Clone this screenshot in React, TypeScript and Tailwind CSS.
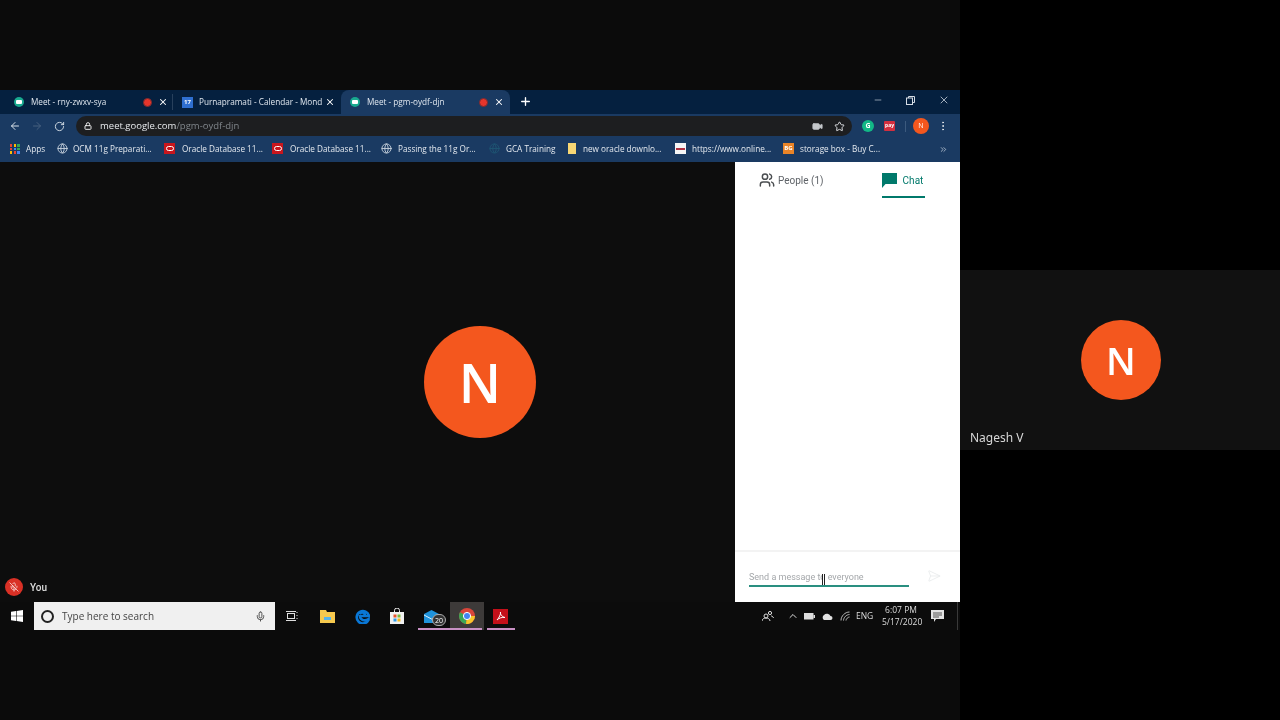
import React from 'react';
import { ArrowLeft, ArrowRight, RotateCw, Lock, Star, Video, Plus, X, Minus, ChevronUp, Mic, MicOff, EllipsisVertical, ChevronsRight, Globe, Users, SendHorizontal } from 'lucide-react';

const MeetIcon = () => (
    <svg width="10" height="10" viewBox="0 0 10 10" className="shrink-0">
        <circle cx="5" cy="5" r="5" fill="#19a98f" />
        <rect x="2" y="3" width="6" height="4" rx="1" fill="#ffffff" />
    </svg>
);

const RecDot = () => (
    <div className="w-[9px] h-[9px] rounded-full bg-[#e5352b] border border-[#7d2a2e] shrink-0" />
);

const Tab: React.FC<{ title: string; icon: React.ReactNode; rec?: boolean; className: string; textClass: string }> = ({ title, icon, rec, className, textClass }) => (
    <div className={`flex items-center h-full ${className}`}>
        {icon}
        <span className={`text-[8.2px] text-[#dfe6ee] whitespace-nowrap ${textClass}`}>{title}</span>
        {rec && <RecDot />}
        <X size={10} strokeWidth={2.5} className="text-white ml-[6px] shrink-0" />
    </div>
);

const OracleIcon = () => (
    <div className="w-[11px] h-[11px] bg-[#c8161d] flex items-center justify-center shrink-0">
        <div className="w-[8px] h-[5px] rounded-full border border-white" />
    </div>
);

const Bookmark: React.FC<{ label: string; icon: React.ReactNode; className: string }> = ({ label, icon, className }) => (
    <div className={`flex items-center ${className}`}>
        {icon}
        <span className="text-[8.2px] text-[#e4e9ef] whitespace-nowrap">{label}</span>
    </div>
);

const BrowserChrome = () => (
    <div className="font-['Open_Sans',sans-serif]">
        {/* tab strip */}
        <div className="h-[24px] bg-[#05203f] flex items-stretch relative">
            <Tab title="Meet - rny-zwxv-sya" icon={<MeetIcon />} rec className="w-[173px] pl-[14px] border-r border-[#28405c] my-[4px] !h-auto" textClass="ml-[7px] w-[112px]" />
            <Tab title="Purnapramati - Calendar - Mond" icon={
                <div className="w-[11px] h-[11px] bg-[#2f6fd0] text-white text-[6px] font-bold flex items-center justify-center shrink-0 ml-[9px]">17</div>
            } className="w-[168px]" textClass="ml-[6px] w-[120px]" />
            <Tab title="Meet - pgm-oydf-djn" icon={<MeetIcon />} rec className="w-[169px] pl-[9px] bg-[#1a3a62] rounded-t-lg" textClass="ml-[7px] w-[112px]" />
            <Plus size={13} strokeWidth={2.5} className="text-white self-center ml-[9px] mb-[2px]" />
            <div className="ml-auto flex items-center pr-[10px] gap-[23px] text-[#d5dce5] pb-[4px]">
                <Minus size={10} strokeWidth={1.5} />
                <svg width="9" height="9" viewBox="0 0 9 9" fill="none" stroke="currentColor"><rect x="0.5" y="2" width="6" height="6.5" /><path d="M2.5 2V0.5h6V6.5H7" /></svg>
                <X size={12} strokeWidth={1.5} />
            </div>
        </div>
        {/* toolbar */}
        <div className="h-[24px] bg-[#1a3a62] flex items-center">
            <ArrowLeft size={12} className="text-[#d8e0e8] ml-[9px]" />
            <ArrowRight size={12} className="text-[#47607f] ml-[10px]" />
            <RotateCw size={11} className="text-[#d8e0e8] ml-[11px]" />
            <div className="ml-[11px] w-[776px] h-[20px] rounded-full bg-[#1d1e20] flex items-center">
                <Lock size={8} strokeWidth={3} className="text-[#e8e8e8] ml-[8px]" />
                <span className="text-[9.5px] ml-[8px] text-[#e8eaed]">meet.google.com<span className="text-[#80868b]">/pgm-oydf-djn</span></span>
                <Video size={11} fill="#c4c7ca" className="text-[#c4c7ca] ml-auto" />
                <Star size={11} className="text-[#e8eaed] ml-[11px] mr-[7px]" />
            </div>
            <div className="w-[12px] h-[12px] rounded-full bg-[#12b886] ml-[10px] text-white text-[7px] font-bold flex items-center justify-center">G</div>
            <div className="w-[11px] h-[10px] rounded-[1px] bg-[#d32f3f] ml-[10px] text-white text-[5px] font-bold flex items-center justify-center">pay</div>
            <div className="w-px h-[11px] bg-[#3c5a7e] ml-[10px]" />
            <div className="w-[16px] h-[16px] rounded-full bg-[#f4571e] ml-[7px] text-white text-[7px] flex items-center justify-center">N</div>
            <EllipsisVertical size={12} className="text-[#e0e5ea] ml-[8px]" />
        </div>
        {/* bookmarks */}
        <div className="h-[24px] pb-[2px] bg-[#1a3a62] flex items-center relative">
            <Bookmark label="Apps" className="ml-[10px] w-[47px] gap-[6px]" icon={
                <div className="grid grid-cols-3 gap-px w-[10px] shrink-0">
                    {['#ea4335','#fbbc04','#34a853','#ea4335','#4285f4','#34a853','#fbbc04','#ea4335','#4285f4'].map((c, i) => (
                        <div key={i} className="w-[2.4px] h-[2.4px]" style={{ backgroundColor: c }} />
                    ))}
                </div>
            } />
            <Bookmark label="OCM 11g Preparati..." className="w-[107px] gap-[5px]" icon={<Globe size={11} className="text-[#c5d0dc] shrink-0" />} />
            <Bookmark label="Oracle Database 11..." className="w-[108px] gap-[7px]" icon={<OracleIcon />} />
            <Bookmark label="Oracle Database 11..." className="w-[109px] gap-[7px]" icon={<OracleIcon />} />
            <Bookmark label="Passing the 11g Or..." className="w-[108px] gap-[6px]" icon={<Globe size={11} className="text-[#c5d0dc] shrink-0" />} />
            <Bookmark label="GCA Training" className="w-[79px] gap-[6px]" icon={<Globe size={11} className="text-[#1f5573] shrink-0" />} />
            <Bookmark label="new oracle downlo..." className="w-[107px] gap-[7px]" icon={<div className="w-[8px] h-[11px] bg-[#f7d774] shrink-0" />} />
            <Bookmark label="https://www.online..." className="w-[108px] gap-[6px]" icon={
                <div className="w-[11px] h-[11px] bg-[#f5f5f5] flex items-center justify-center shrink-0"><div className="w-[9px] h-[2px] bg-[#b03040]" /></div>
            } />
            <Bookmark label="storage box - Buy C..." className="gap-[6px]" icon={
                <div className="w-[11px] h-[11px] bg-[#e98427] text-white text-[6px] font-bold flex items-center justify-center shrink-0">BG</div>
            } />
            <ChevronsRight size={9} className="absolute right-[12px] text-[#c9d3df]" />
        </div>
    </div>
);

const ChatPanel = () => (
    <div className="w-[225px] bg-white flex flex-col font-['Roboto',sans-serif] relative">
        <div className="h-[36px] flex text-[10px]">
            <div className="flex items-center ml-[24px] gap-[3px] text-[#5f6368]">
                <Users size={16} strokeWidth={2.2} className="text-[#4a4d50]" />
                <span>People (1)</span>
            </div>
            <div className="ml-[58px] w-[43px] h-full border-b-2 border-[#00796b] flex items-center gap-[6px] text-[#00796b] pt-[2px]">
                <svg width="15" height="15" viewBox="0 0 15 15"><path d="M0 0h15v11H3.5L0 15z" fill="#00796b" /></svg>
                <span>Chat</span>
            </div>
        </div>
        <div className="flex-1" />
        <div className="h-[52px] border-t-2 border-[#f3f3f3] flex items-start pl-[14px]">
            <div className="w-[160px] h-[23px] mt-[12px] border-b-2 border-[#2a8f80] flex items-center text-[9px] text-[#a4a7aa] pt-[6px]">
                Send a message to everyone
            </div>
            <SendHorizontal size={14} strokeWidth={1.2} className="text-[#e4e6e8] ml-[18px] mt-[17px]" />
        </div>
        {/* mouse cursor */}
        <div className="absolute left-[87px] bottom-[17px] w-[3px] h-[11px] border-x border-[#222] bg-white" />
    </div>
);

const Taskbar = () => (
    <div className="h-[28px] bg-[#0c0c0c] flex items-center font-['Open_Sans',sans-serif] relative">
        <svg width="12" height="12" viewBox="0 0 12 12" fill="#fff" className="ml-[11px]"><path d="M0 1.7 5 1v4.7H0zM5.6.9 12 0v5.7H5.6zM0 6.3h5V11l-5-.7zM5.6 6.3H12V12l-6.4-.9z" /></svg>
        <div className="ml-[11px] w-[241px] h-full bg-[#f0f0f0] flex items-center">
            <div className="ml-[7px] w-[13px] h-[13px] rounded-full border-2 border-[#222]" />
            <span className="ml-[8px] text-[10px] text-[#444]">Type here to search</span>
            <Mic size={11} className="ml-auto mr-[9px] text-[#444]" />
        </div>
        <svg width="12" height="10" viewBox="0 0 12 10" fill="none" stroke="#ddd" className="ml-[11px]"><rect x="1.5" y="2.5" width="7" height="5" /><path d="M0 .5h10M0 9.5h10M11 1v1M11 4v1M11 7v1" /></svg>
        {/* explorer */}
        <div className="ml-[21px] w-[16px] flex justify-center">
            <svg width="15" height="13" viewBox="0 0 15 13"><path d="M0 0h6l1 2h8v11H0z" fill="#f6c94e" /><rect x="4" y="7" width="7" height="3" fill="#58b4e8" /></svg>
        </div>
        {/* edge */}
        <div className="ml-[19px] w-[16px] flex justify-center">
            <svg width="15" height="15" viewBox="0 0 15 15" fill="none"><path d="M13.5 11a6.2 6.2 0 1 1 .5-4H5c0 4 4.5 5.5 8.5 3z M4.5 5c1-2 5-2.5 5.5 1" stroke="#0a78d7" strokeWidth="2.6" /></svg>
        </div>
        {/* store */}
        <div className="ml-[19px] w-[16px] flex justify-center">
            <svg width="14" height="16" viewBox="0 0 14 16">
                <path d="M4.5 4V2.5a2.5 2.5 0 0 1 5 0V4" fill="none" stroke="#f1f1f1" />
                <rect y="4" width="14" height="12" fill="#f1f1f1" />
                <rect x="3.5" y="6.5" width="3" height="3" fill="#e8532c" />
                <rect x="7.5" y="6.5" width="3" height="3" fill="#7db93a" />
                <rect x="3.5" y="10.5" width="3" height="3" fill="#2f9be8" />
                <rect x="7.5" y="10.5" width="3" height="3" fill="#f5b91e" />
            </svg>
        </div>
        {/* mail */}
        <div className="ml-[19px] w-[20px] h-full relative flex items-center">
            <svg width="15" height="13" viewBox="0 0 15 13"><path d="M0 4l7.5-4L15 4v9H0z" fill="#1f93dc" /><path d="M0 5l7.5 4L15 5" stroke="#e3f2fb" fill="none" /></svg>
            <div className="absolute left-[8px] top-[12px] w-[14px] h-[12px] rounded-full bg-[#333] border border-[#aaa] text-white text-[7px] leading-none flex items-center justify-center">20</div>
            <div className="absolute left-[-6px] right-[-6px] bottom-0 h-[2px] bg-[#c890c4]" />
        </div>
        {/* chrome */}
        <div className="ml-[6px] w-[34px] h-full bg-[#3d3a39] relative flex items-center justify-center">
            <svg width="16" height="16" viewBox="0 0 16 16"><circle cx="8" cy="8" r="8" fill="#d9453a" /><path d="M8 8 1 4.2A8 8 0 0 0 7 16z" fill="#3aa757" /><path d="M8 8h8a8 8 0 0 1-9 8z" fill="#f7c52b" /><circle cx="8" cy="8" r="3.6" fill="#4285f4" stroke="#fff" /></svg>
            <div className="absolute left-0 right-[2px] bottom-0 h-[2px] bg-[#c890c4]" />
        </div>
        {/* acrobat */}
        <div className="ml-[3px] w-[28px] h-full relative flex items-center justify-center pr-[1px]">
            <div className="w-[15px] h-[15px] bg-[#c3101a] flex items-center justify-center">
                <svg width="10" height="10" viewBox="0 0 10 10" fill="none" stroke="#fff"><path d="M1 9C3 7 5 3 4.5 1 4 3 6 6 9 6.5 6 6 3 7 1 9z" /></svg>
            </div>
            <div className="absolute left-0 right-0 bottom-0 h-[2px] bg-[#c890c4]" />
        </div>
        {/* tray */}
        <div className="ml-auto flex items-center h-full text-[#dcdcdc]">
            <svg width="12" height="12" viewBox="0 0 12 12" fill="none" stroke="#ddd"><circle cx="4" cy="6" r="2" /><path d="M0 11c0-2 2-3 4-3s4 1 4 3" /><circle cx="8" cy="3" r="1.6" /><path d="M9 6c1 0 2 .5 2.5 2" /></svg>
            <ChevronUp size={12} className="ml-[13px]" />
            <svg width="11" height="8" viewBox="0 0 11 8" fill="#ddd" className="ml-[5px]"><rect x="0" y="1" width="9.5" height="6.5" /><rect x="9.5" y="3" width="1.5" height="3" /></svg>
            <svg width="12" height="7" viewBox="0 0 12 7" fill="#e2e2e2" className="ml-[6px]"><path d="M3 7a3 3 0 0 1 0-5 4 4 0 0 1 6.5 1A2 2 0 0 1 9.5 7z" /></svg>
            <svg width="10" height="10" viewBox="0 0 10 10" fill="none" stroke="#bbb" className="ml-[7px]"><path d="M1 9.5C1 5 5 1 9.5 1M3.5 9.5C3.5 6.5 6.5 3.5 9.5 3.5M6 9.5C6 8 8 6 9.5 6" /></svg>
            <span className="ml-[6px] w-[24px] text-[8.5px]">ENG</span>
            <div className="ml-[2px] w-[38px] text-[8.5px] leading-[12px] text-center">
                <div>6:07 PM</div>
                <div>5/17/2020</div>
            </div>
            <svg width="13" height="12" viewBox="0 0 13 12" className="ml-[11px]"><path d="M0 0h13v9H5l-2 3V9H0z" fill="#e4e4e4" /><path d="M2 3h9M2 5h9M2 7h6" stroke="#555" /></svg>
            <div className="w-px h-full bg-[#3a3a3a] ml-[13px] mr-[2px]" />
        </div>
    </div>
);

export default function App() {
    return (
        <div className="w-[1280px] h-[720px] bg-black flex overflow-hidden blur-[0.35px]">
            <div className="w-[960px] flex flex-col">
                <div className="h-[90px] bg-[#0b0b0b]" />
                <BrowserChrome />
                <div className="h-[440px] flex bg-[#0d0d0d]">
                    <div className="w-[735px] flex flex-col justify-between">
                        <div className="ml-[424px] mt-[164px] w-[112px] h-[112px] rounded-full bg-[#f4571e] flex items-center justify-center text-white text-[54px] font-semibold font-['Open_Sans',sans-serif]">N</div>
                        <div className="flex items-center ml-[5px] mb-[6px] gap-[7px]">
                            <div className="w-[18px] h-[18px] rounded-full bg-[#d93025] flex items-center justify-center">
                                <MicOff size={10} className="text-white/80" />
                            </div>
                            <span className="text-[10px] font-medium text-[#dcdcdc] font-['Roboto',sans-serif]">You</span>
                        </div>
                    </div>
                    <ChatPanel />
                </div>
                <Taskbar />
                <div className="flex-1 bg-[#0b0b0b]" />
            </div>
            <div className="w-[320px] flex flex-col">
                <div className="h-[270px]" />
                <div className="h-[180px] bg-[#111111] flex flex-col">
                    <div className="ml-[121px] mt-[50px] w-[80px] h-[80px] rounded-full bg-[#f4571e] flex items-center justify-center text-white text-[38px] font-semibold font-['Open_Sans',sans-serif]">N</div>
                    <div className="ml-[10px] mt-[29px] text-[12px] text-[#d8d8d8] font-['Noto_Sans',sans-serif]">Nagesh V</div>
                </div>
            </div>
        </div>
    );
}
